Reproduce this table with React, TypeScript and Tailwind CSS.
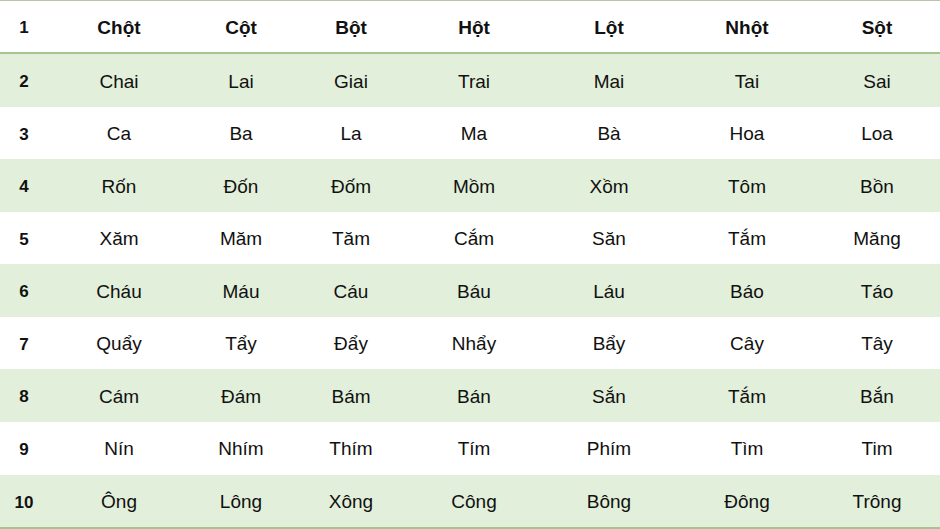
import React from 'react';

const HEAD = ["Chột", "Cột", "Bột", "Hột", "Lột", "Nhột", "Sột"];

const ROWS: string[][] = [
  ["Chai", "Lai", "Giai", "Trai", "Mai", "Tai", "Sai"],
  ["Ca", "Ba", "La", "Ma", "Bà", "Hoa", "Loa"],
  ["Rốn", "Đốn", "Đốm", "Mồm", "Xồm", "Tôm", "Bồn"],
  ["Xăm", "Măm", "Tăm", "Cắm", "Săn", "Tắm", "Măng"],
  ["Cháu", "Máu", "Cáu", "Báu", "Láu", "Báo", "Táo"],
  ["Quẩy", "Tẩy", "Đẩy", "Nhẩy", "Bẩy", "Cây", "Tây"],
  ["Cám", "Đám", "Bám", "Bán", "Sắn", "Tắm", "Bắn"],
  ["Nín", "Nhím", "Thím", "Tím", "Phím", "Tìm", "Tim"],
  ["Ông", "Lông", "Xông", "Công", "Bông", "Đông", "Trông"],
];

const COLS = "grid-cols-[48px_142px_102px_118px_128px_142px_134px_126px]";

export default function App() {
  return (
    <div className="w-[940px] h-[529px] bg-white text-[#111] font-['Liberation_Sans',Arial,sans-serif] border-t border-[#b8c6a8] border-b-2 border-b-[#a8c48e] flex flex-col overflow-hidden">
      <div className={`grid ${COLS} h-[53px] pt-[3px] items-center border-b-2 border-[#a8c48e] shrink-0`}>
        <div className="text-center text-[17px] font-bold">1</div>
        {HEAD.map((h) => (
          <div key={h} className="text-center text-[19px] font-bold">{h}</div>
        ))}
      </div>
      {ROWS.map((row, i) => (
        <div
          key={i}
          className={`grid ${COLS} flex-1 pt-[3px] items-center ${i % 2 === 0 ? 'bg-[#e2efda]' : 'bg-white'}`}
        >
          <div className="text-center text-[17px] font-bold">{i + 2}</div>
          {row.map((c, j) => (
            <div key={j} className="text-center text-[19px]">{c}</div>
          ))}
        </div>
      ))}
    </div>
  );
}
